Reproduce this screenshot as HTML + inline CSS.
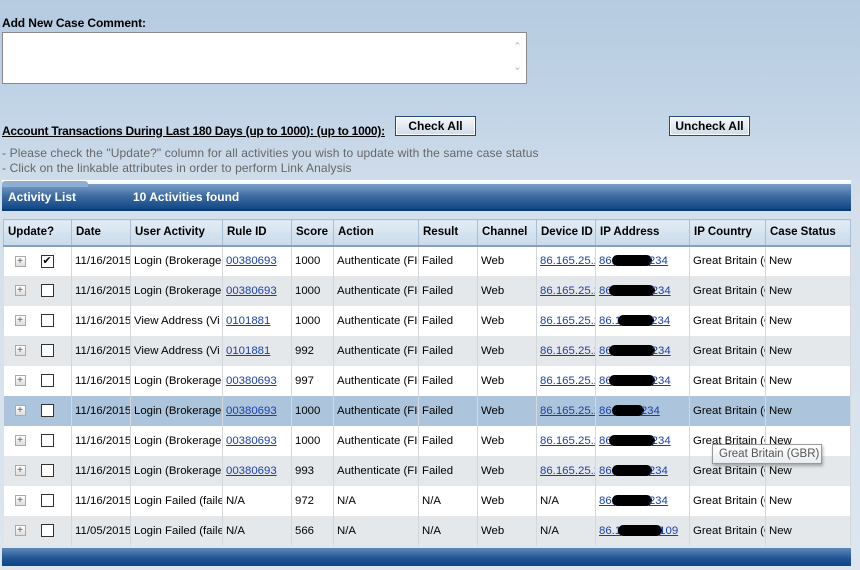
<!DOCTYPE html>
<html><head><style>
*{margin:0;padding:0;box-sizing:border-box}
body{width:860px;height:570px;overflow:hidden;background:linear-gradient(#b6cbe0 0,#c3d5e7 120px,#d3dfeb 200px,#dde6ef 570px);font-family:"Liberation Sans",Arial,sans-serif;font-size:12px;color:#000;position:relative}
.abs{position:absolute}
.lbl{font-weight:bold;font-size:12px;letter-spacing:-0.1px}
.ta{left:2px;top:32px;width:525px;height:52px;background:#fff;border:1px solid #8a8a8a}
.btn{height:20px;border:1px solid #2a4a7a;background:linear-gradient(#f4f8fc,#cfdcea);box-shadow:inset 0 0 0 1px #fff;font-weight:bold;font-size:12px;text-align:center;line-height:18px}
.note{color:#666;font-size:12px;line-height:15px;letter-spacing:0.12px}
.bar{left:2px;top:184px;width:849px;height:27px;background:linear-gradient(#7c9fc8,#3c6aa0 50%,#124887);border-bottom:2px solid #0a3a78}
table{position:absolute;left:3px;top:219px;width:847px;border-collapse:collapse;table-layout:fixed}
th{height:26px;background:linear-gradient(#e2ecf6,#c9daea);border:1px solid #a9bfd4;border-bottom:2px solid #8aa0b8;text-align:left;padding-left:4px;font-size:11.5px;white-space:nowrap;overflow:hidden}
td{height:30px;border-right:1px solid #d4d8dc;padding-left:3px;white-space:nowrap;overflow:hidden;font-size:11.4px}
tr.w td{background:#fff}tr.g td{background:#e5e8eb}tr.s td{background:#adc5dc}
a{color:#1a3fa8;text-decoration:underline}
.pl{display:inline-block;width:11px;height:11px;border:1px solid #aaa;background:linear-gradient(#fff,#ddd);font-size:10px;line-height:9px;text-align:center;color:#555;vertical-align:middle;margin-left:11px}
.cb{display:inline-block;width:13px;height:13px;border:1px solid #333;background:#fff;vertical-align:middle;margin-left:15px;font-size:11px;line-height:11px;text-align:center}
.red{display:inline-block;width:40px;height:11px;background:#000;border-radius:6px;vertical-align:middle;margin:0 -3px}
</style></head><body>
<div class="abs lbl" style="left:2px;top:16px">Add New Case Comment:</div>
<div class="abs ta"><div class="abs" style="right:4px;top:4px;color:#bbb;font-size:11px;line-height:20px">&#8963;<br>&#8964;</div></div>
<div class="abs lbl" style="left:2px;top:124px;text-decoration:underline;letter-spacing:-0.25px">Account Transactions During Last 180 Days (up to 1000): (up to 1000):</div>
<div class="abs btn" style="left:395px;top:116px;width:81px">Check All</div>
<div class="abs btn" style="left:669px;top:116px;width:81px">Uncheck All</div>
<div class="abs note" style="left:2px;top:146px">- Please check the "Update?" column for all activities you wish to update with the same case status<br>- Click on the linkable attributes in order to perform Link Analysis</div>
<div class="abs" style="left:2px;top:180px;width:849px;height:8px;background:linear-gradient(#fff,#e3ebf3)"></div>
<div class="abs bar"></div>
<div class="abs" style="left:2px;top:181px;width:86px;height:6px;background:#8eaed2;border-radius:3px 3px 0 0"></div>
<div class="abs" style="left:8px;top:190px;color:#fff;font-weight:bold;font-size:12px">Activity List</div>
<div class="abs" style="left:133px;top:190px;color:#fff;font-weight:bold;font-size:12px">10 Activities found</div>
<table>
<colgroup><col style="width:68px"><col style="width:59px"><col style="width:92px"><col style="width:69px"><col style="width:42px"><col style="width:85px"><col style="width:59px"><col style="width:59px"><col style="width:59px"><col style="width:94px"><col style="width:76px"><col style="width:85px"></colgroup>
<tr><th>Update?</th><th>Date</th><th>User Activity</th><th>Rule ID</th><th>Score</th><th>Action</th><th>Result</th><th>Channel</th><th>Device ID</th><th>IP Address</th><th>IP Country</th><th>Case Status</th></tr>
<tr class="w"><td style="padding:0"><span class="pl">+</span><span class="cb">&#10004;</span></td><td>11/16/2015</td><td>Login (Brokerage l</td><td><a>00380693</a></td><td>1000</td><td>Authenticate (FI-</td><td>Failed</td><td>Web</td><td><a>86.165.25.2</a></td><td><a>86.<span class="red"></span>234</a></td><td>Great Britain (G</td><td>New</td></tr>
<tr class="g"><td style="padding:0"><span class="pl">+</span><span class="cb"></span></td><td>11/16/2015</td><td>Login (Brokerage l</td><td><a>00380693</a></td><td>1000</td><td>Authenticate (FI-</td><td>Failed</td><td>Web</td><td><a>86.165.25.2</a></td><td><a>86<span class="red" style="width:46px"></span>234</a></td><td>Great Britain (G</td><td>New</td></tr>
<tr class="w"><td style="padding:0"><span class="pl">+</span><span class="cb"></span></td><td>11/16/2015</td><td>View Address (Vi</td><td><a>0101881</a></td><td>1000</td><td>Authenticate (FI-</td><td>Failed</td><td>Web</td><td><a>86.165.25.2</a></td><td><a>86.1<span class="red" style="width:36px"></span>234</a></td><td>Great Britain (G</td><td>New</td></tr>
<tr class="g"><td style="padding:0"><span class="pl">+</span><span class="cb"></span></td><td>11/16/2015</td><td>View Address (Vi</td><td><a>0101881</a></td><td>992</td><td>Authenticate (FI-</td><td>Failed</td><td>Web</td><td><a>86.165.25.2</a></td><td><a>86<span class="red" style="width:46px"></span>234</a></td><td>Great Britain (G</td><td>New</td></tr>
<tr class="w"><td style="padding:0"><span class="pl">+</span><span class="cb"></span></td><td>11/16/2015</td><td>Login (Brokerage l</td><td><a>00380693</a></td><td>997</td><td>Authenticate (FI-</td><td>Failed</td><td>Web</td><td><a>86.165.25.2</a></td><td><a>86<span class="red" style="width:46px"></span>234</a></td><td>Great Britain (G</td><td>New</td></tr>
<tr class="s"><td style="padding:0"><span class="pl">+</span><span class="cb"></span></td><td>11/16/2015</td><td>Login (Brokerage l</td><td><a>00380693</a></td><td>1000</td><td>Authenticate (FI-</td><td>Failed</td><td>Web</td><td><a>86.165.25.2</a></td><td><a>86.<span class="red" style="width:32px"></span>234</a></td><td>Great Britain (G</td><td>New</td></tr>
<tr class="w"><td style="padding:0"><span class="pl">+</span><span class="cb"></span></td><td>11/16/2015</td><td>Login (Brokerage l</td><td><a>00380693</a></td><td>1000</td><td>Authenticate (FI-</td><td>Failed</td><td>Web</td><td><a>86.165.25.2</a></td><td><a>86<span class="red" style="width:46px"></span>234</a></td><td>Great Britain (G</td><td>New</td></tr>
<tr class="g"><td style="padding:0"><span class="pl">+</span><span class="cb"></span></td><td>11/16/2015</td><td>Login (Brokerage l</td><td><a>00380693</a></td><td>993</td><td>Authenticate (FI-</td><td>Failed</td><td>Web</td><td><a>86.165.25.2</a></td><td><a>86.<span class="red"></span>234</a></td><td>Great Britain (G</td><td>New</td></tr>
<tr class="w"><td style="padding:0"><span class="pl">+</span><span class="cb"></span></td><td>11/16/2015</td><td>Login Failed (failed</td><td>N/A</td><td>972</td><td>N/A</td><td>N/A</td><td>Web</td><td>N/A</td><td><a>86.<span class="red"></span>234</a></td><td>Great Britain (G</td><td>New</td></tr>
<tr class="g"><td style="padding:0"><span class="pl">+</span><span class="cb"></span></td><td>11/05/2015</td><td>Login Failed (failed</td><td>N/A</td><td>566</td><td>N/A</td><td>N/A</td><td>Web</td><td>N/A</td><td><a>86.1<span class="red" style="width:44px"></span>109</a></td><td>Great Britain (G</td><td>New</td></tr>
</table>
<div class="abs" style="left:2px;top:548px;width:849px;height:18px;background:linear-gradient(#5f89b9,#1e5393 60%,#0f4585)"></div>
<div class="abs" style="left:712px;top:444px;width:110px;height:20px;background:linear-gradient(#fff,#e8ecf0);border:1px solid #999;box-shadow:1px 2px 3px rgba(0,0,0,.3);color:#555;font-size:11.5px;line-height:18px;padding-left:6px;white-space:nowrap">Great Britain (GBR)</div>
</body></html>
